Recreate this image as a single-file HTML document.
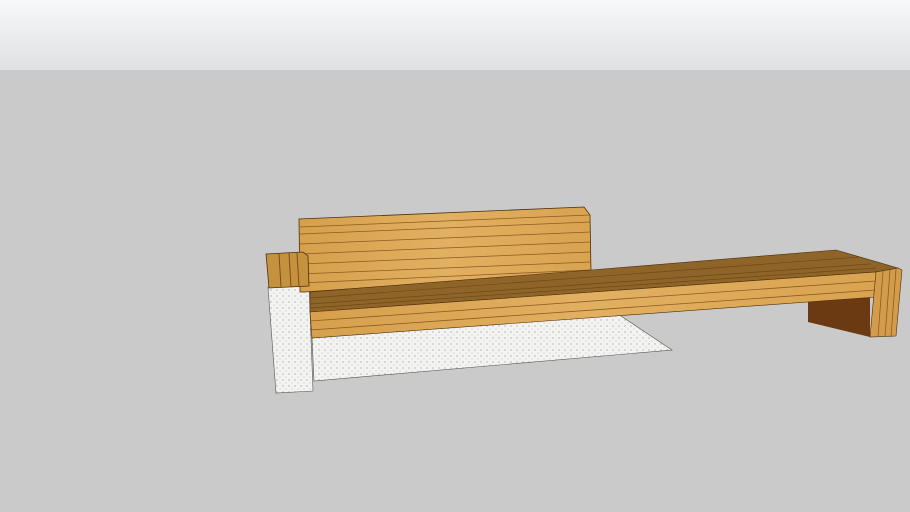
<!DOCTYPE html>
<html><head><style>
html,body{margin:0;padding:0;width:910px;height:512px;overflow:hidden;background:#c9c9c9}
</style></head><body>
<svg width="910" height="512" viewBox="0 0 910 512" xmlns="http://www.w3.org/2000/svg">
<defs>
<linearGradient id="sky" x1="0" y1="0" x2="0" y2="1">
<stop offset="0" stop-color="#f7f8f9"/><stop offset="1" stop-color="#dfe1e3"/>
</linearGradient>
<linearGradient id="wood" x1="0" y1="0" x2="1" y2="0">
<stop offset="0" stop-color="#d6a04c"/><stop offset="0.5" stop-color="#e2b062"/><stop offset="1" stop-color="#d9a350"/>
</linearGradient>
<pattern id="conc" width="6" height="6" patternUnits="userSpaceOnUse">
<rect width="6" height="6" fill="#f3f3f1"/><circle cx="1" cy="2" r="0.6" fill="#8f8f8f"/><circle cx="4" cy="5" r="0.5" fill="#aaa"/>
</pattern>
</defs>
<rect width="910" height="70" fill="url(#sky)"/>
<rect y="70" width="910" height="442" fill="#cacaca"/>
<polygon points="312,338 618,314 672,350 314,381" fill="url(#conc)" stroke="#555" stroke-width="0.6"/>
<polygon points="268,287 309,285 313,391 276,393" fill="url(#conc)" stroke="#555" stroke-width="0.6"/>
<polygon points="299,219 584,207 590,215 591,272 305,292 300,292" fill="url(#wood)" stroke="#4a300c" stroke-width="0.8"/>
<g stroke="#8a5c20" stroke-width="0.8">
<line x1="300" y1="227" x2="590" y2="215"/><line x1="300" y1="234" x2="590" y2="222"/>
<line x1="300" y1="244" x2="590" y2="232"/><line x1="300" y1="254" x2="590" y2="242"/>
<line x1="300" y1="264" x2="590" y2="252"/><line x1="300" y1="274" x2="590" y2="262"/>
<line x1="300" y1="283" x2="590" y2="270"/>
</g>
<polygon points="266,254 303,252 308,256 309,286 269,288" fill="#c4913f" stroke="#4a300c" stroke-width="0.8"/>
<g stroke="#7a4e16" stroke-width="1"><line x1="279" y1="254" x2="281" y2="287"/><line x1="289" y1="253" x2="291" y2="287"/><line x1="297" y1="253" x2="299" y2="286"/></g>
<polygon points="808,296 870,292 870,337 808,322" fill="#6b3a12"/>
<polygon points="310,292 591,270 836,250 898,268 876,272 310,312" fill="#8e6428" stroke="#4a300c" stroke-width="0.6"/>
<g stroke="#6e4a18" stroke-width="0.7"><line x1="310" y1="298" x2="860" y2="257"/><line x1="310" y1="304" x2="870" y2="264"/><line x1="310" y1="308" x2="876" y2="268"/></g>
<polygon points="310,312 876,272 876,297 312,338" fill="url(#wood)" stroke="#4a300c" stroke-width="0.6"/>
<g stroke="#8a5c20" stroke-width="0.8"><line x1="310" y1="321" x2="876" y2="281"/><line x1="310" y1="330" x2="876" y2="290"/></g>
<polygon points="876,272 898,268 902,270 896,336 870,337" fill="#d29c4a" stroke="#4a300c" stroke-width="0.6"/>
<g stroke="#8a5c20" stroke-width="0.8"><line x1="883" y1="271" x2="878" y2="337"/><line x1="890" y1="270" x2="885" y2="337"/><line x1="896" y1="269" x2="891" y2="337"/></g>
</svg>
</body></html>
